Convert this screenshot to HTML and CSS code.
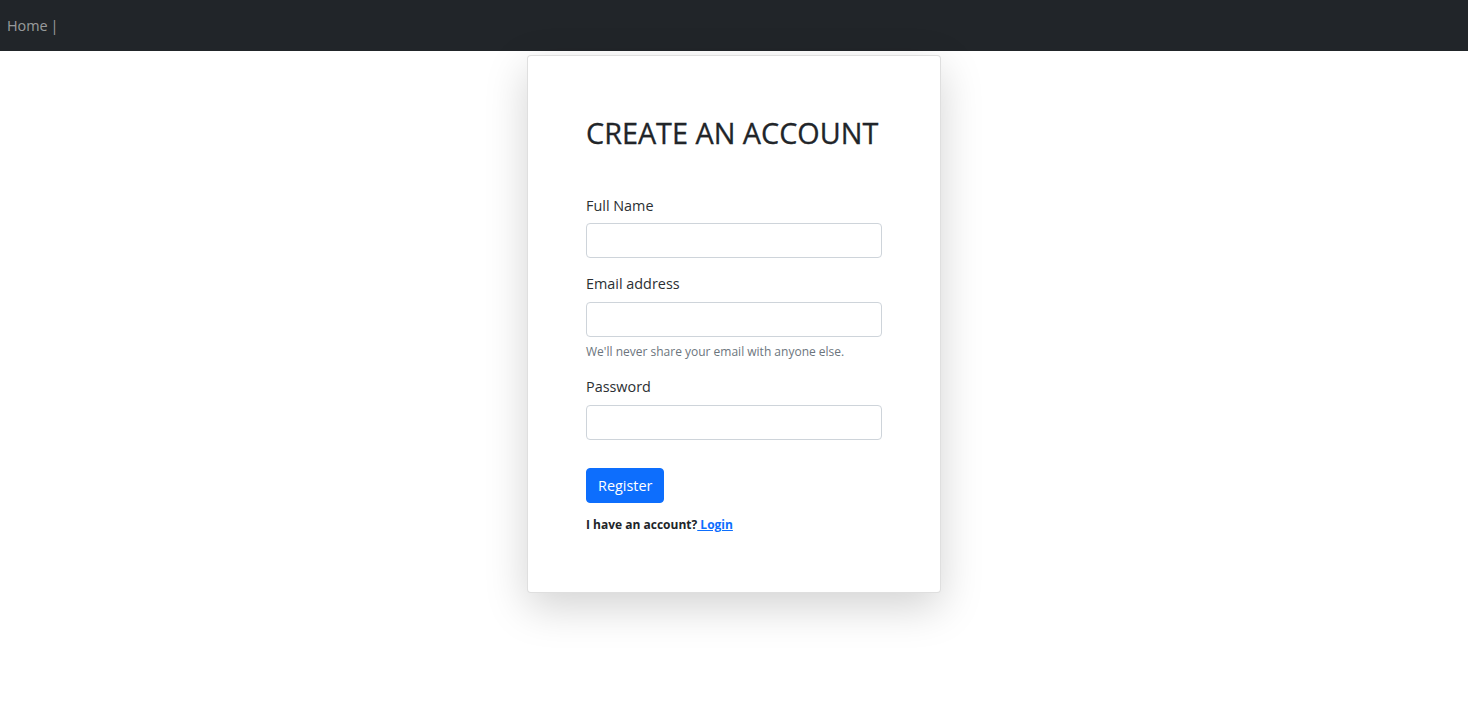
FILE: index.html
```html
<!DOCTYPE html>
<html lang="en">
<head>
<meta charset="utf-8">
<title>Create an account</title>
<link rel="stylesheet" href="styles.css">
</head>
<body>
<nav class="navbar">
  <a class="nav-link" href="#">Home |</a>
</nav>
<main class="page">
  <div class="card">
    <h2 class="title">CREATE AN ACCOUNT</h2>
    <form class="form">
      <div class="group">
        <label class="label" for="name">Full Name</label>
        <input class="control" id="name" type="text">
      </div>
      <div class="group">
        <label class="label" for="email">Email address</label>
        <input class="control" id="email" type="email">
        <div class="help">We'll never share your email with anyone else.</div>
      </div>
      <div class="group">
        <label class="label" for="pw">Password</label>
        <input class="control" id="pw" type="password">
      </div>
      <button class="btn" type="button">Register</button>
      <p class="switch">I have an account?<a href="#" class="link"> Login</a></p>
    </form>
  </div>
</main>
</body>
</html>
```
FILE: styles.css
```css
* { box-sizing: border-box; }
html, body { margin: 0; padding: 0; }
body {
  font-family: "Open Sans", "Noto Sans", "Liberation Sans", sans-serif;
  font-size: 14.4px;
  line-height: 1.5;
  color: #212529;
  background: #fff;
  min-height: 100vh;
}
.navbar {
  height: 51px;
  background: #212529;
  display: flex;
  align-items: center;
  padding: 0 7px;
}
.nav-link {
  color: rgba(255,255,255,.55);
  text-decoration: none;
  font-size: 14.4px;
  word-spacing: -1px;
}
.page {
  display: flex;
  justify-content: center;
  padding-top: 4px;
  padding-bottom: 60px;
}
.card {
  width: 414px;
  height: 538px;
  border: 1px solid rgba(0,0,0,.125);
  border-radius: 4px;
  background: #fff;
  box-shadow: 0 14px 43px rgba(0,0,0,.175);
  padding: 60px 58px 0 58px;
}
.title {
  margin: 0 0 44px 0;
  font-size: 28.8px;
  font-weight: 500;
  line-height: 1.2;
  white-space: nowrap;
  -webkit-text-stroke: 0.3px #212529;
}
.form { display: flex; flex-direction: column; align-items: flex-start; }
.group { width: 100%; margin-bottom: 14.4px; }
.label {
  display: block;
  margin-bottom: 7.2px;
  color: #2b2f33;
}
.control {
  display: block;
  width: 100%;
  height: 35px;
  border: 1px solid #ced4da;
  border-radius: 4px;
  background: #fff;
  font: inherit;
  padding: 5px 11px;
}
.help {
  margin-top: 5px;
  font-size: 12px;
  line-height: 20px;
  color: #6c757d;
}
.btn {
  margin-top: 14px;
  height: 35px;
  padding: 0 11px;
  background: #0d6efd;
  border: 1px solid #0d6efd;
  border-radius: 4px;
  color: #fff;
  font: inherit;
}
.switch {
  margin: 13px 0 0 0;
  font-size: 12px;
  font-weight: 700;
}
.link { color: #0d6efd; }
```
